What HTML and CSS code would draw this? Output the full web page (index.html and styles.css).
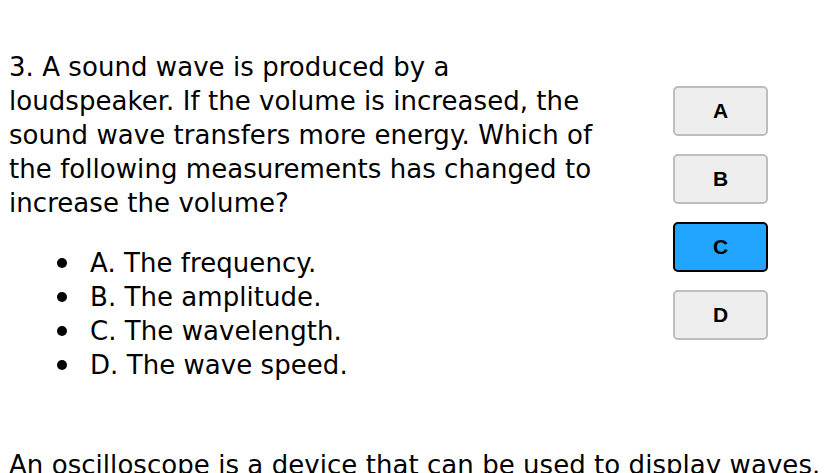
FILE: index.html
```html
<!DOCTYPE html>
<html>
<head>
<meta charset="utf-8">
<link rel="stylesheet" href="styles.css">
</head>
<body>
<div class="page">
  <div class="row">
    <div class="question">
      <p class="stem">3. A sound wave is produced by a loudspeaker. If the volume is increased, the sound wave transfers more energy. Which of the following measurements has changed to increase the volume?</p>
      <ul class="options">
        <li>A. The frequency.</li>
        <li>B. The amplitude.</li>
        <li>C. The wavelength.</li>
        <li>D. The wave speed.</li>
      </ul>
    </div>
    <div class="answers">
      <button class="btn">A</button>
      <button class="btn">B</button>
      <button class="btn selected">C</button>
      <button class="btn">D</button>
    </div>
  </div>
  <p class="next">An oscilloscope is a device that can be used to display waves.</p>
</div>
</body>
</html>
```
FILE: styles.css
```css
html, body {
  margin: 0;
  padding: 0;
  background: #ffffff;
}
.page {
  padding: 50px 8px 0 8px;
  font-family: "DejaVu Sans", Verdana, sans-serif;
  font-size: 26px;
  letter-spacing: 0.05px;
  line-height: 34px;
  color: #000000;
  white-space: nowrap;
}
.row {
  display: flex;
  align-items: flex-start;
}
.question {
  width: 605px;
  white-space: normal;
}
.stem {
  margin: 0;
  padding-left: 1px;
}
.options {
  list-style: none;
  margin: 26px 0 0 0;
  padding-left: 49px;
}
.options li {
  display: flex;
  align-items: center;
}
.options li::before {
  content: "";
  width: 10px;
  height: 10px;
  border-radius: 50%;
  background: #000000;
  margin-right: 23px;
  flex-shrink: 0;
}
.answers {
  display: flex;
  flex-direction: column;
  gap: 18px;
  margin-left: 60px;
  margin-top: 36px;
}
.btn {
  width: 95px;
  height: 50px;
  background: #eeeeee;
  border: 2px solid #bdbdbd;
  border-radius: 5px;
  font-family: "Liberation Sans", Arial, sans-serif;
  font-weight: bold;
  font-size: 21px;
  letter-spacing: 0;
  color: #000000;
  padding: 0;
}
.btn.selected {
  background: #21a5ff;
  border-color: #000000;
}
.next {
  margin: 66px 0 0 0;
  padding-left: 1px;
}
```
